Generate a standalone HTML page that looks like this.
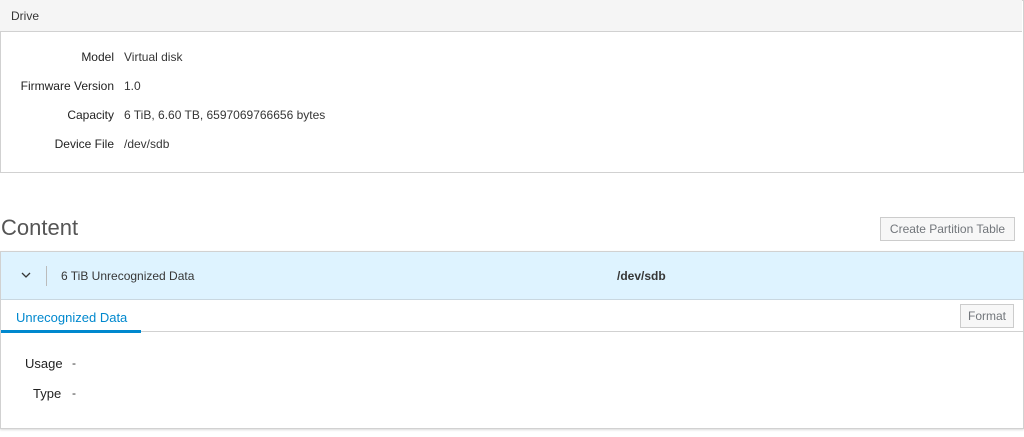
<!DOCTYPE html>
<html><head><style>
body{margin:0;width:1024px;height:437px;background:#fff;font-family:"Liberation Sans",sans-serif;font-size:12px;color:#363636;position:relative;overflow:hidden}
.abs{position:absolute}
.panel{left:0;top:0;width:1022px;height:171px;border:1px solid #d1d1d1}
.ph{left:0;top:0;width:1022px;height:31px;background:#f5f5f5;border-bottom:1px solid #d1d1d1}
.lbl{text-align:right;width:114px;left:0;color:#222}
.val{left:124px}
.btn{border:1px solid #ccc;background:#f7f7f7;color:#72767b;font-size:12px;text-align:center;line-height:22px;height:22px}
</style></head><body>
<div class="abs panel"></div>
<div class="abs ph"></div>
<div class="abs" style="left:11px;top:9px">Drive</div>
<div class="abs lbl" style="top:50px">Model</div><div class="abs val" style="top:50px">Virtual disk</div>
<div class="abs lbl" style="top:79px">Firmware Version</div><div class="abs val" style="top:79px">1.0</div>
<div class="abs lbl" style="top:108px">Capacity</div><div class="abs val" style="top:108px">6 TiB, 6.60 TB, 6597069766656 bytes</div>
<div class="abs lbl" style="top:137px">Device File</div><div class="abs val" style="top:137px">/dev/sdb</div>
<div class="abs" style="left:1px;top:215px;font-size:22px;color:#555">Content</div>
<div class="abs btn" style="left:880px;top:217px;width:133px">Create Partition Table</div>
<div class="abs" style="left:0;top:251px;width:1022px;border:1px solid #d1d1d1;height:176px;box-shadow:0 1px 2px rgba(0,0,0,.15)"></div>
<div class="abs" style="left:1px;top:252px;width:1022px;height:47px;background:#def3ff;border-bottom:1px solid #c9d7e0"></div>
<svg class="abs" style="left:21px;top:271px" width="10" height="8"><path d="M1 2 L5 6 L9 2" stroke="#363636" stroke-width="1.3" fill="none"/></svg>
<div class="abs" style="left:46px;top:266px;width:1px;height:20px;background:#bbb"></div>
<div class="abs" style="left:61px;top:269px">6 TiB Unrecognized Data</div>
<div class="abs" style="left:617px;top:269px;font-weight:bold">/dev/sdb</div>
<div class="abs" style="left:1px;top:331px;width:1022px;height:1px;background:#d1d1d1"></div>
<div class="abs" style="left:16px;top:310px;color:#0088ce;font-size:13px">Unrecognized Data</div>
<div class="abs" style="left:1px;top:330px;width:140px;height:3px;background:#0088ce"></div>
<div class="abs btn" style="left:960px;top:304px;width:52px">Format</div>
<div class="abs" style="left:25px;top:356px;font-size:13px;color:#222">Usage</div><div class="abs" style="left:72px;top:356px">-</div>
<div class="abs" style="left:33px;top:386px;font-size:13px;color:#222">Type</div><div class="abs" style="left:72px;top:386px">-</div>
</body></html>
